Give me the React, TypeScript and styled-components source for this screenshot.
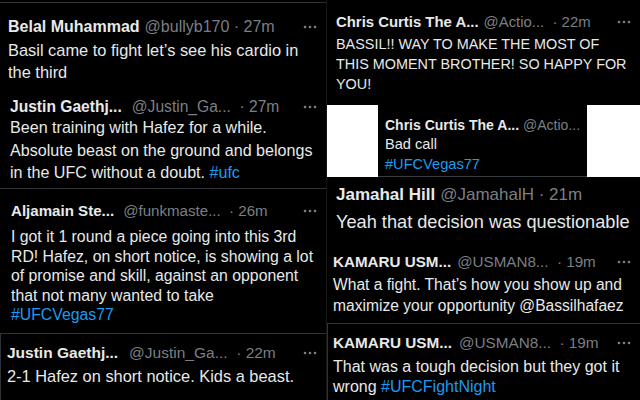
import React from "react";
import styled, { createGlobalStyle } from "styled-components";

const Global = createGlobalStyle`
  html, body { margin: 0; padding: 0; background: #000; }
  body {
    width: 640px;
    height: 400px;
    overflow: hidden;
    font-family: "Liberation Sans", Arial, sans-serif;
    -webkit-font-smoothing: antialiased;
  }
`;

const Page = styled.div`
  display: grid;
  grid-template-columns: 327px 313px;
  width: 640px;
  height: 400px;
  background: #000;
`;

const Column = styled.div<{ $divider?: boolean }>`
  display: flex;
  flex-direction: column;
  overflow: hidden;
  border-right: ${(p) => (p.$divider ? "1px solid #161616" : "none")};
`;

const Section = styled.div<{ $top?: number; $left?: boolean; $height?: number; $lineTop?: boolean }>`
  display: flex;
  flex-direction: column;
  margin-top: ${(p) => p.$top ?? 0}px;
  border-top: ${(p) => (p.$lineTop ? "1px solid #2f3336" : "none")};
  border-left: ${(p) => (p.$left ? "1px solid #2f3336" : "none")};
  height: ${(p) => (p.$height ? `${p.$height}px` : "auto")};
  flex: ${(p) => (p.$height ? "none" : "1")};
  box-sizing: border-box;
`;

const TweetBox = styled.div<{ $pt: number; $pl: number; $pr: number }>`
  display: flex;
  flex-direction: column;
  padding: ${(p) => p.$pt}px ${(p) => p.$pr}px 0 ${(p) => p.$pl}px;
`;

const Header = styled.div<{ $size: number; $lh: number }>`
  display: flex;
  align-items: center;
  font-size: ${(p) => p.$size}px;
  line-height: ${(p) => p.$lh}px;
  height: ${(p) => p.$lh}px;
  white-space: nowrap;
`;

const Name = styled.span`
  color: #e7e9ea;
  font-weight: 700;
`;

const Handle = styled.span<{ $gap: number }>`
  color: #7b7f84;
  margin-left: ${(p) => p.$gap}px;
  white-space: pre;
`;

const More = styled.span`
  margin-left: auto;
  display: flex;
  align-items: center;
  color: #7b7f84;
`;

const Body = styled.div<{ $size: number; $lh: number; $mt: number }>`
  color: #e7e9ea;
  font-size: ${(p) => p.$size}px;
  line-height: ${(p) => p.$lh}px;
  margin-top: ${(p) => p.$mt}px;
`;

const Line = styled.div`
  white-space: nowrap;
`;

const Tag = styled.span`
  color: #1d9bf0;
`;

const Band = styled.div`
  display: flex;
  height: 72px;
  margin-top: 12px;
`;

const WhiteBlock = styled.div<{ $w: number }>`
  width: ${(p) => p.$w}px;
  background: #fff;
  flex: none;
`;

const QuoteCard = styled.div`
  flex: 1;
  background: #000;
  border-bottom: 1px solid #3a3d40;
  padding: 10px 6px 0 7px;
  display: flex;
  flex-direction: column;
`;

const Dots = () => (
  <svg width="14" height="4" viewBox="0 0 14 4" fill="currentColor">
    <circle cx="2" cy="2" r="1.3" />
    <circle cx="7" cy="2" r="1.3" />
    <circle cx="12" cy="2" r="1.3" />
  </svg>
);

type TweetProps = {
  name: string;
  handle: string;
  time?: string;
  more?: boolean;
  size: number;
  hsize: number;
  hlh?: number;
  lh: number;
  pt: number;
  pl: number;
  pr?: number;
  mt?: number;
  hgap?: number;
  lines: React.ReactNode[];
};

const Tweet = ({ name, handle, time, more = true, size, hsize, hlh = 20, lh, pt, pl, pr = 9, mt = 0, hgap = 5, lines }: TweetProps) => (
  <TweetBox $pt={pt} $pl={pl} $pr={pr}>
    <Header $size={hsize} $lh={hlh}>
      <Name>{name}</Name>
      <Handle $gap={hgap}>
        {handle}
        {time ? ` · ${time}` : ""}
      </Handle>
      {more && (
        <More>
          <Dots />
        </More>
      )}
    </Header>
    <Body $size={size} $lh={lh} $mt={mt}>
      {lines.map((l, i) => (
        <Line key={i}>{l}</Line>
      ))}
    </Body>
  </TweetBox>
);

export default function App() {
  return (
    <>
      <Global />
      <Page>
        <Column $divider>
          <Section $top={2} $lineTop $height={186}>
            <Tweet
              name="Belal Muhammad"
              handle="@bullyb170"
              time="27m"
              hsize={16}
              size={16.4}
              lh={22}
              pt={14}
              pl={8}
              mt={2}
              lines={["Basil came to fight let’s see his cardio in", "the third"]}
            />
            <Tweet
              name="Justin Gaethj..."
              handle="@Justin_Ga... "
              time="27m"
              hsize={15.6}
              size={16.1}
              hlh={18}
              lh={22.5}
              pt={15}
              pl={10}
              hgap={10}
              lines={[
                "Been training with Hafez for a while.",
                "Absolute beast on the ground and belongs",
                <>
                  in the UFC without a doubt. <Tag>#ufc</Tag>
                </>,
              ]}
            />
          </Section>
          <Section $lineTop $height={145}>
            <Tweet
              name="Aljamain Ste..."
              handle="@funkmaste... "
              time="26m"
              hsize={15.1}
              size={15.8}
              lh={19.5}
              pt={12}
              pl={11}
              mt={6}
              hgap={9}
              lines={[
                "I got it 1 round a piece going into this 3rd",
                "RD! Hafez, on short notice, is showing a lot",
                "of promise and skill, against an opponent",
                "that not many wanted to take",
                <Tag>#UFCVegas77</Tag>,
              ]}
            />
          </Section>
          <Section $lineTop $left>
            <Tweet
              name="Justin Gaethj..."
              handle="@Justin_Ga... "
              time="22m"
              hsize={15.5}
              size={16.4}
              lh={22}
              pt={9}
              pl={6}
              mt={2}
              hgap={11}
              lines={["2-1 Hafez on short notice. Kids a beast."]}
            />
          </Section>
        </Column>
        <Column>
          <Section $height={93}>
            <Tweet
              name="Chris Curtis The A..."
              handle="@Actio... "
              time="22m"
              hsize={14.9}
              size={14.4}
              lh={20}
              pt={12}
              pl={9}
              mt={2}
              hgap={5}
              lines={["BASSIL!! WAY TO MAKE THE MOST OF", "THIS MOMENT BROTHER! SO HAPPY FOR", "YOU!"]}
            />
          </Section>
          <Band>
            <WhiteBlock $w={51} />
            <QuoteCard>
              <Header $size={14} $lh={20}>
                <Name>Chris Curtis The A...</Name>
                <Handle $gap={4}>@Actio...</Handle>
              </Header>
              <Body $size={14.6} $lh={19.5} $mt={0}>
                <Line>Bad call</Line>
                <Line>
                  <Tag>#UFCVegas77</Tag>
                </Line>
              </Body>
            </QuoteCard>
            <WhiteBlock $w={53} />
          </Band>
          <Section $height={146}>
            <Tweet
              name="Jamahal Hill"
              handle="@JamahalH"
              time="21m"
              more={false}
              hsize={17}
              size={18.2}
              lh={26}
              pt={8}
              pl={9}
              mt={4}
              lines={["Yeah that decision was questionable"]}
            />
            <Tweet
              name="KAMARU USM..."
              handle="@USMAN8... "
              time="19m"
              hsize={15.2}
              size={15.6}
              lh={20.5}
              pt={17}
              pl={6}
              mt={3}
              hgap={6}
              lines={["What a fight. That’s how you show up and", "maximize your opportunity @Bassilhafaez"]}
            />
          </Section>
          <Section $lineTop $left>
            <Tweet
              name="KAMARU USM..."
              handle="@USMAN8... "
              time="19m"
              hsize={15.3}
              size={16}
              lh={20}
              pt={9}
              pl={5}
              mt={4}
              hgap={7}
              lines={[
                "That was a tough decision but they got it",
                <>
                  wrong <Tag>#UFCFightNight</Tag>
                </>,
              ]}
            />
          </Section>
        </Column>
      </Page>
    </>
  );
}
